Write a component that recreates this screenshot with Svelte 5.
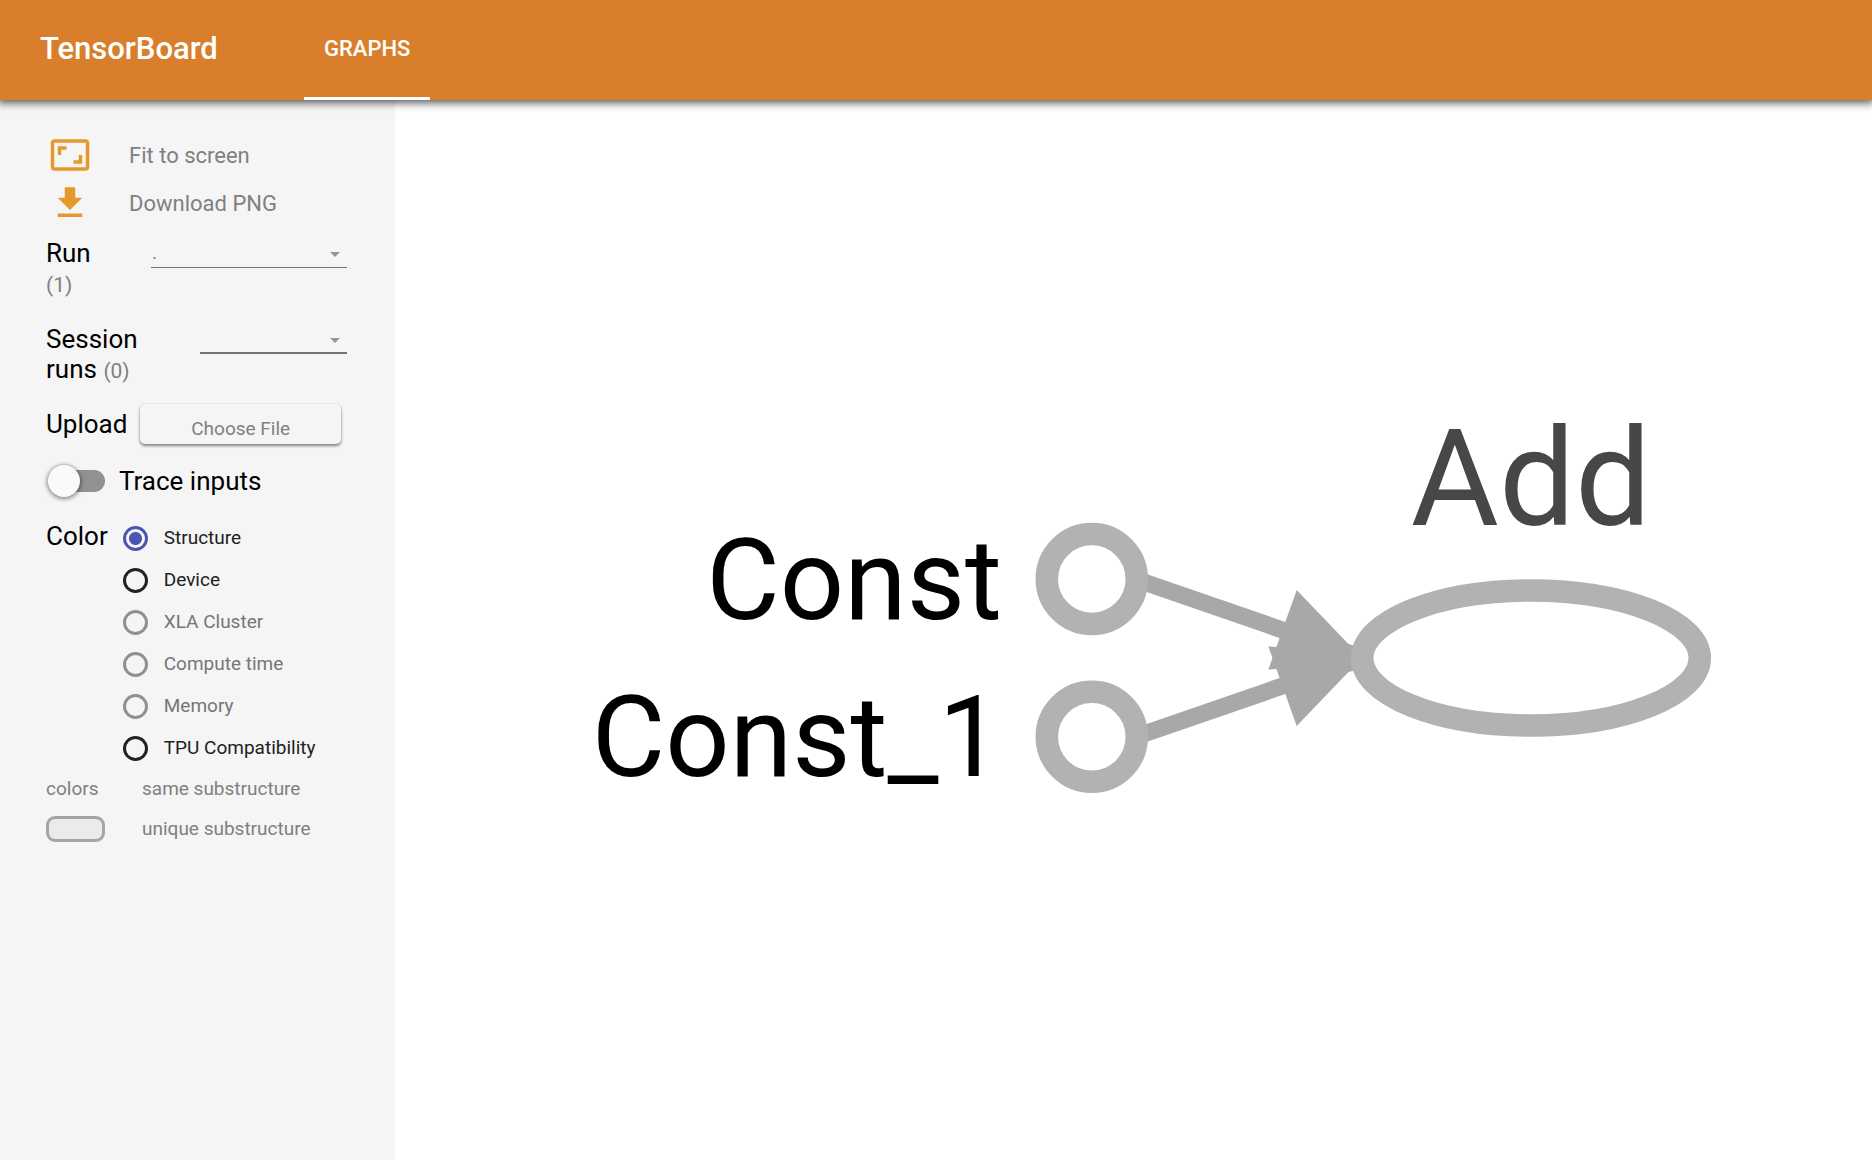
<script lang="ts">
  type ColorMode = { id: string; label: string; disabled: boolean };

  const colorModes: ColorMode[] = [
    { id: "structure", label: "Structure", disabled: false },
    { id: "device", label: "Device", disabled: false },
    { id: "xla_cluster", label: "XLA Cluster", disabled: true },
    { id: "compute_time", label: "Compute time", disabled: true },
    { id: "memory", label: "Memory", disabled: true },
    { id: "op_compatibility", label: "TPU Compatibility", disabled: false },
  ];

  const runs = ["."];
  const sessionRuns: string[] = [];

  let run = $state(".");
  let sessionRun = $state("");
  let traceInputs = $state(false);
  let colorBy = $state("structure");
</script>

<div class="page">
  <header class="toolbar">
    <h1>TensorBoard</h1>
    <nav>
      <a class="tab active" href="#graphs">GRAPHS</a>
    </nav>
  </header>

  <div class="content">
    <aside class="sidebar">
      <div class="actions">
        <button class="action">
          <svg width="42" height="42" viewBox="0 0 24 24" fill="currentColor" aria-hidden="true"><path d="M19 12h-2v3h-3v2h5v-5zM7 9h3V7H5v5h2V9zm14-6H3c-1.1 0-2 .9-2 2v14c0 1.1.9 2 2 2h18c1.1 0 2-.9 2-2V5c0-1.1-.9-2-2-2zm0 16.01H3V4.99h18v14.02z"/></svg>
          <span>Fit to screen</span>
        </button>
        <button class="action">
          <svg width="42" height="42" viewBox="0 0 24 24" fill="currentColor" aria-hidden="true"><path d="M19 9h-4V3H9v6H5l7 7 7-7zM5 18v2h14v-2H5z"/></svg>
          <span>Download PNG</span>
        </button>
      </div>

      <div class="row selects">
        <label for="run">Run<br /><span class="counter">({runs.length})</span></label>
        <div class="dropdown">
          <select id="run" bind:value={run}>
            {#each runs as name}
              <option value={name}>{name}</option>
            {/each}
          </select>
        </div>
      </div>

      <div class="row selects">
        <label for="session">Session<br />runs <span class="counter">({sessionRuns.length})</span></label>
        <div class="dropdown narrow">
          <select id="session" bind:value={sessionRun}>
            {#each sessionRuns as name}
              <option value={name}>{name}</option>
            {/each}
          </select>
        </div>
      </div>

      <div class="row upload">
        <span id="upload-label">Upload</span>
        <button class="file-btn" aria-describedby="upload-label">Choose File</button>
      </div>

      <div class="row trace">
        <input id="trace" class="toggle" type="checkbox" bind:checked={traceInputs} />
        <label for="trace">Trace inputs</label>
      </div>

      <div class="row color" role="radiogroup" aria-labelledby="color-label">
        <span id="color-label">Color</span>
        <div class="modes">
          {#each colorModes as mode (mode.id)}
            <label class="mode" class:disabled={mode.disabled}>
              <input
                type="radio"
                name="color"
                value={mode.id}
                disabled={mode.disabled}
                bind:group={colorBy}
              />
              {mode.label}
            </label>
          {/each}
        </div>
      </div>

      <div class="legend">
        <span>colors</span>
        <span>same substructure</span>
        <span class="swatch"></span>
        <span>unique substructure</span>
      </div>
    </aside>

    <main class="graph">
      <svg viewBox="0 0 1477 1060" role="img" aria-label="Main graph">
        <g class="edges">
          <path class="edge" d="M740 479 L960 555" />
          <path class="edge" d="M740 637 L960 561" />
          <path class="arrow" d="M901.7 490 L873.3 569.7 L969.7 561 Z" />
          <path class="arrow" d="M901.7 626 L873.3 546.3 L969.7 555 Z" />
        </g>
        <g class="nodes">
          <circle cx="696.8" cy="479" r="45" />
          <circle cx="696.8" cy="636.8" r="45" />
          <ellipse cx="1136" cy="558" rx="168.8" ry="67.6" />
        </g>
        <text class="input-label" x="607" y="519">Const</text>
        <text class="input-label" x="607" y="676">Const_1</text>
        <text class="op-label" x="1136" y="425">Add</text>
      </svg>
    </main>
  </div>
</div>

<style>
  :global(body) {
    margin: 0;
    background: #fff;
  }

  .page {
    display: flex;
    flex-direction: column;
    min-height: 100vh;
    font-family: Roboto, "Liberation Sans", sans-serif;
    color: #000;
  }

  .toolbar {
    display: flex;
    height: 100px;
    padding-left: 40px;
    background: #d97f2b;
    color: #fff;
    box-shadow: 0 1px 8px 2px rgba(0, 0, 0, 0.65);
    z-index: 1;
  }

  .toolbar h1 {
    width: 264px;
    margin: 0;
    font-size: 31px;
    font-weight: 500;
    line-height: 98px;
  }

  .toolbar nav {
    display: flex;
  }

  .tab {
    display: flex;
    align-items: center;
    padding: 0 20px;
    border-bottom: 3px solid transparent;
    color: #fff;
    font-size: 22px;
    font-weight: 500;
    text-decoration: none;
  }

  .tab.active {
    border-color: #fff;
  }

  .content {
    display: flex;
    flex: 1;
  }

  .sidebar {
    box-sizing: border-box;
    flex: none;
    width: 395px;
    padding: 31px 48px 31px 46px;
    background: #f5f5f5;
    font-size: 26px;
    line-height: 30px;
  }

  button {
    font-family: inherit;
    cursor: pointer;
  }

  .actions {
    margin-bottom: 11px;
  }

  .action {
    display: flex;
    align-items: center;
    gap: 38px;
    width: 100%;
    height: 48px;
    padding: 0 3px;
    border: none;
    background: none;
    color: #e6982d;
    font-size: 22px;
  }

  .action span {
    color: #808080;
  }

  .row {
    display: flex;
  }

  .selects {
    justify-content: space-between;
    align-items: flex-start;
    margin-bottom: 26px;
  }

  .counter {
    color: #808080;
    font-size: 21px;
    line-height: 20px;
  }

  .dropdown {
    position: relative;
    width: 196px;
  }

  .dropdown.narrow {
    width: 147px;
  }

  .dropdown::after {
    content: '';
    position: absolute;
    right: 7px;
    top: 14px;
    border: 5px solid transparent;
    border-top-color: #969696;
    border-bottom: none;
    pointer-events: none;
  }

  .dropdown select {
    display: block;
    appearance: none;
    box-sizing: border-box;
    width: 100%;
    height: 30px;
    padding: 0 1px;
    border: none;
    border-bottom: 1px solid #737373;
    border-radius: 0;
    background: transparent;
    color: #808080;
    font-family: inherit;
    font-size: 19px;
    outline: none;
  }

  .dropdown.narrow select {
    border-bottom-width: 2px;
  }

  .upload {
    align-items: center;
    gap: 13px;
    margin: -6px 0 20px;
  }

  .file-btn {
    box-sizing: border-box;
    flex: 1;
    height: 40px;
    margin-right: 6px;
    padding: 9px 0 0;
    border: none;
    border-radius: 5px;
    background: #f5f5f5;
    box-shadow: 0 2px 3px rgba(0, 0, 0, 0.45), 0 0 2px rgba(0, 0, 0, 0.15);
    color: #808080;
    font-size: 19px;
  }

  .trace {
    align-items: center;
    gap: 14px;
    height: 34px;
    margin-bottom: 19px;
  }

  .toggle {
    appearance: none;
    position: relative;
    width: 56px;
    height: 22px;
    margin: 0 0 0 3px;
    border-radius: 11px;
    background: #919191;
    cursor: pointer;
  }

  .toggle::before {
    content: '';
    position: absolute;
    left: -1px;
    top: -5px;
    width: 32px;
    height: 32px;
    border-radius: 50%;
    background: #fafafa;
    box-shadow: 0 1px 4px 1px rgba(0, 0, 0, 0.45);
  }

  .toggle:checked::before {
    left: 25px;
  }

  .color {
    align-items: flex-start;
    gap: 15px;
  }

  #color-label {
    line-height: 38px;
  }

  .mode {
    display: flex;
    align-items: center;
    gap: 16px;
    height: 42px;
    color: #212121;
    font-size: 19px;
  }

  .mode.disabled {
    color: #757575;
  }

  .mode input {
    appearance: none;
    box-sizing: border-box;
    width: 25px;
    height: 25px;
    margin: 0;
    border: 3px solid #212121;
    border-radius: 50%;
  }

  .mode input:disabled {
    border-color: #909090;
  }

  .mode input:checked {
    border-color: #4955b0;
    background: radial-gradient(circle, #4955b0 6px, transparent 7px);
  }

  .legend {
    display: grid;
    grid-template-columns: 59px 1fr;
    grid-auto-rows: 40px;
    column-gap: 37px;
    align-items: center;
    color: #808080;
    font-size: 19px;
  }

  .swatch {
    box-sizing: border-box;
    height: 26px;
    border: 3px solid #a5a5a5;
    border-radius: 9px;
    background: #ebebeb;
  }

  .graph {
    flex: 1;
    min-width: 0;
  }

  .graph svg {
    display: block;
    width: 100%;
  }

  .edge {
    fill: none;
    stroke: #a8a8a8;
    stroke-width: 17;
  }

  .arrow {
    fill: #a8a8a8;
  }

  .nodes {
    fill: #fff;
    stroke: #b2b2b2;
    stroke-width: 22.5;
  }

  .input-label {
    font-size: 113px;
    text-anchor: end;
  }

  .op-label {
    fill: #474747;
    font-size: 135px;
    text-anchor: middle;
  }
</style>
